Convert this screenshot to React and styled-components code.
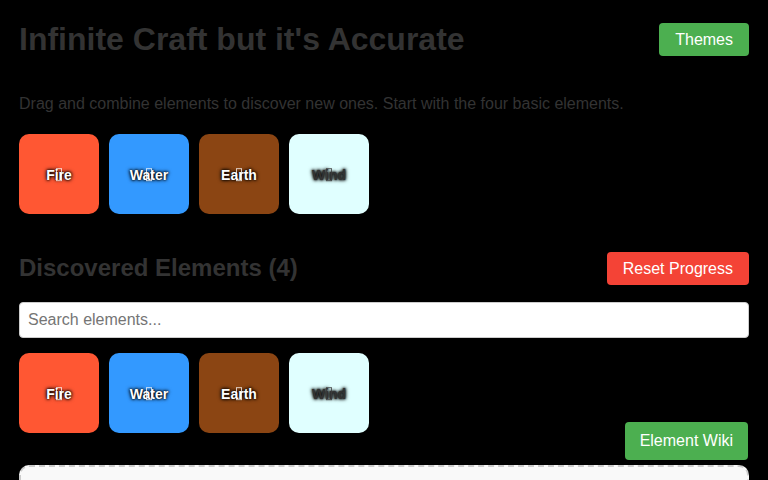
import React, { useState } from 'react';
import styled, { createGlobalStyle } from 'styled-components';

const GlobalStyle = createGlobalStyle`
    html, body {
        margin: 0;
        padding: 0;
        background: #000;
    }
    body {
        font-family: "Liberation Sans", Arial, sans-serif;
        overflow: hidden;
    }
`;

const Page = styled.div`
    padding: 0 19px 40px 19px;
    color: #333;
`;

const Header = styled.div`
    display: flex;
    justify-content: space-between;
    align-items: center;
`;

const Title = styled.h1`
    font-size: 32px;
    margin: 21px 0;
    color: #333;
`;

const Button = styled.button`
    background: ${props => props.color || '#4caf50'};
    color: #fff;
    border: none;
    border-radius: 4px;
    padding: 8px 16px;
    font-family: inherit;
    font-size: 16px;
    line-height: 17px;
    cursor: pointer;
`;

const WikiButton = styled(Button)`
    position: fixed;
    right: 20px;
    bottom: 20px;
    padding: 10px 15px;
    line-height: 18px;
`;

const Intro = styled.p`
    font-size: 16px;
    margin: 16px 0 21px 0;
    color: #333;
`;

const TileRow = styled.div`
    display: flex;
    flex-wrap: wrap;
    gap: 10px;
    margin-bottom: ${props => props.$bottom || 0}px;
`;

const Tile = styled.div`
    position: relative;
    width: 80px;
    height: 80px;
    border-radius: 10px;
    background: ${props => props.$bg};
    color: ${props => props.$fg};
    display: flex;
    align-items: center;
    justify-content: center;
    font-weight: bold;
    font-size: 14px;
    padding-top: 1px;
    box-sizing: border-box;
    text-shadow: 0 0 4px #000, 0 0 3px #000, 0 0 2px rgba(0, 0, 0, 0.6);
    cursor: grab;
`;

/* the emoji marker renders as an empty glyph box in the reference */
const Marker = styled.span`
    position: absolute;
    left: 50%;
    top: 50%;
    width: 4px;
    height: 11px;
    transform: translate(-50%, -45%);
    border: 1px solid ${props => props.$dark ? 'rgba(60, 60, 60, 0.8)' : 'rgba(255, 255, 255, 0.75)'};
    box-sizing: content-box;
`;

const SectionHead = styled(Header)`
    margin-bottom: 17px;
`;

const SectionTitle = styled.h2`
    font-size: 24px;
    margin: 0;
    line-height: 34px;
    color: #333;
`;

const Search = styled.input`
    display: block;
    box-sizing: border-box;
    width: 100%;
    height: 36px;
    padding: 8px;
    margin-bottom: 15px;
    border: 1px solid #ccc;
    border-radius: 4px;
    font-family: inherit;
    font-size: 16px;
    &::placeholder {
        color: #757575;
    }
`;

const DropZone = styled.div`
    box-sizing: border-box;
    height: 300px;
    background: #f9f9f9;
    border: 2px dashed #ccc;
    border-radius: 10px;
`;

const elements = [
    { name: 'Fire', bg: '#ff5733', fg: '#fff' },
    { name: 'Water', bg: '#3399ff', fg: '#fff' },
    { name: 'Earth', bg: '#8b4513', fg: '#fff' },
    { name: 'Wind', bg: '#e0ffff', fg: '#333', dark: true },
];

const ElementTile = ({ el }) => (
    <Tile $bg={el.bg} $fg={el.fg}>
        {el.name}
        <Marker $dark={el.dark} />
    </Tile>
);

export default function App() {
    const [query, setQuery] = useState('');
    const found = elements.filter(e => e.name.toLowerCase().includes(query.toLowerCase()));

    return (
        <Page>
            <GlobalStyle />
            <Header>
                <Title>Infinite Craft but it's Accurate</Title>
                <Button>Themes</Button>
            </Header>
            <Intro>Drag and combine elements to discover new ones. Start with the four basic elements.</Intro>
            <TileRow $bottom={37}>
                {elements.map(el => <ElementTile key={el.name} el={el} />)}
            </TileRow>
            <SectionHead>
                <SectionTitle>Discovered Elements ({elements.length})</SectionTitle>
                <Button color="#f44336">Reset Progress</Button>
            </SectionHead>
            <Search
                placeholder="Search elements..."
                value={query}
                onChange={e => setQuery(e.target.value)}
            />
            <TileRow $bottom={32}>
                {found.map(el => <ElementTile key={el.name} el={el} />)}
            </TileRow>
            <DropZone />
            <WikiButton>Element Wiki</WikiButton>
        </Page>
    );
}
